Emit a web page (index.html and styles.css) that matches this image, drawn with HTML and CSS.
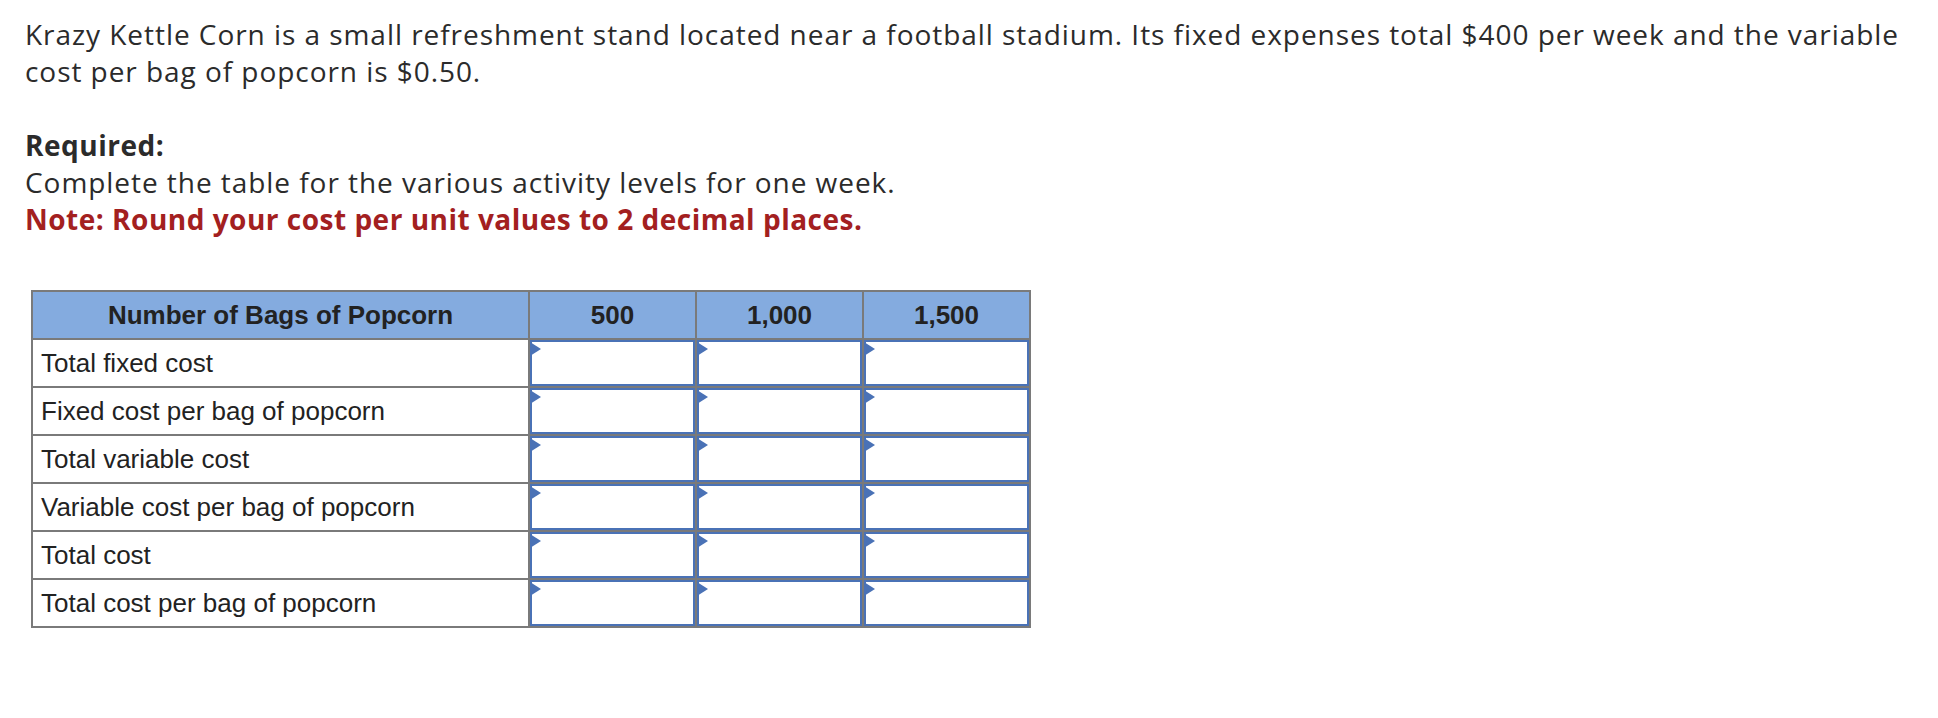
FILE: index.html
```html
<!DOCTYPE html>
<html>
<head>
<meta charset="utf-8">
<link rel="stylesheet" href="styles.css">
</head>
<body>
<div class="page">
  <p class="intro">Krazy Kettle Corn is a small refreshment stand located near a football stadium. Its fixed expenses total $400 per week and the variable cost per bag of popcorn is $0.50.</p>
  <p class="req"><strong>Required:</strong><br>Complete the table for the various activity levels for one week.<br><strong class="note">Note: Round your cost per unit values to 2 decimal places.</strong></p>
  <table class="grid">
    <colgroup><col class="c-label"><col class="c-num"><col class="c-num"><col class="c-num"></colgroup>
    <thead>
      <tr><th>Number of Bags of Popcorn</th><th>500</th><th>1,000</th><th>1,500</th></tr>
    </thead>
    <tbody>
      <tr><td class="label">Total fixed cost</td><td class="in"><div class="box"></div></td><td class="in"><div class="box"></div></td><td class="in"><div class="box"></div></td></tr>
      <tr><td class="label">Fixed cost per bag of popcorn</td><td class="in"><div class="box"></div></td><td class="in"><div class="box"></div></td><td class="in"><div class="box"></div></td></tr>
      <tr><td class="label">Total variable cost</td><td class="in"><div class="box"></div></td><td class="in"><div class="box"></div></td><td class="in"><div class="box"></div></td></tr>
      <tr><td class="label">Variable cost per bag of popcorn</td><td class="in"><div class="box"></div></td><td class="in"><div class="box"></div></td><td class="in"><div class="box"></div></td></tr>
      <tr><td class="label">Total cost</td><td class="in"><div class="box"></div></td><td class="in"><div class="box"></div></td><td class="in"><div class="box"></div></td></tr>
      <tr><td class="label">Total cost per bag of popcorn</td><td class="in"><div class="box"></div></td><td class="in"><div class="box"></div></td><td class="in"><div class="box"></div></td></tr>
    </tbody>
  </table>
</div>
</body>
</html>
```

FILE: styles.css
```css
html, body { margin: 0; padding: 0; background: #fff; }
.page {
  padding: 16px 10px 0 25px;
  font-family: "Open Sans", Lato, sans-serif;
  font-size: 28px;
  letter-spacing: 0.95px;
  line-height: 37px;
  color: #2b2b2b;
}
.intro { margin: 0 0 37px 0; }
.req { margin: 0; }
.req strong { font-weight: 700; letter-spacing: 0.5px; }
.note { color: #a3201f; }

.grid {
  margin: 52px 0 0 6px;
  border-collapse: collapse;
  border: 2px solid #7a7a7a;
  font-family: "Liberation Sans", Arial, sans-serif;
  letter-spacing: 0;
  color: #222;
  table-layout: fixed;
  width: 1000px;
}
.c-label { width: 497px; }
.c-num { width: 167px; }
.grid th {
  background: #84abdf;
  font-weight: 700;
  font-size: 26px;
  height: 46px;
  padding: 0;
  border: 2px solid #7a7a7a;
  text-align: center;
  vertical-align: middle;
  line-height: 30px;
}
.grid td {
  border: 2px solid #7a7a7a;
  height: 46px;
  padding: 0;
  font-size: 26px;
  line-height: 30px;
  vertical-align: middle;
}
.grid td.label { padding: 0 8px; }
.grid td.in { padding: 0; height: 46px; }
.box {
  position: relative;
  height: 42px;
  border: 2px solid #4a72b6;
  background: #fff;
}
.box::before {
  content: "";
  position: absolute;
  left: -2px;
  top: 0;
  width: 0;
  height: 0;
  border-top: 7px solid transparent;
  border-bottom: 7px solid transparent;
  border-left: 11px solid #4a72b6;
}
```
